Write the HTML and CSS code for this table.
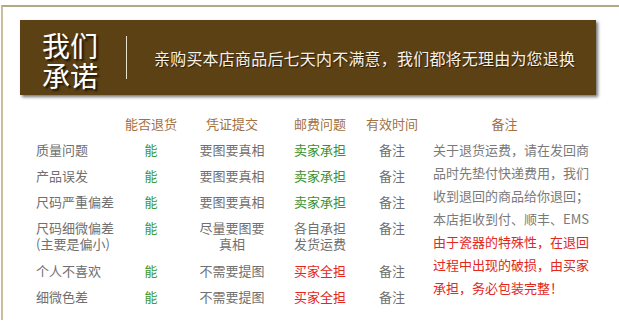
FILE: index.html
```html
<!DOCTYPE html>
<html lang="zh-CN">
<head>
    <meta charset="UTF-8">
    <title>退换承诺</title>
    <link rel="stylesheet" href="styles.css">
</head>
<body>

<div class="frame">
    <div class="banner">
        <div class="promise">我们<br>承诺</div>
        <div class="divider"></div>
        <div class="slogan">亲购买本店商品后七天内不满意，我们都将无理由为您退换</div>
    </div>

    <div class="policy">
        <div class="head"></div>
        <div class="head">能否退货</div>
        <div class="head">凭证提交</div>
        <div class="head">邮费问题</div>
        <div class="head">有效时间</div>
        <div class="head note-head">备注</div>

        <div class="label">质量问题</div>
        <div class="cell yes">能</div>
        <div class="cell">要图要真相</div>
        <div class="cell green">卖家承担</div>
        <div class="cell">备注</div>
        <div class="remarks">
            <span class="gray">关于退货运费，请在发回商<br>品时先垫付快递费用，我们<br>收到退回的商品给你退回；<br>本店拒收到付、顺丰、EMS</span><br>
            <span class="red">由于瓷器的特殊性，在退回<br>过程中出现的破损，由买家<br>承担，务必包装完整！</span>
        </div>

        <div class="label">产品误发</div>
        <div class="cell yes">能</div>
        <div class="cell">要图要真相</div>
        <div class="cell green">卖家承担</div>
        <div class="cell">备注</div>

        <div class="label">尺码严重偏差</div>
        <div class="cell yes">能</div>
        <div class="cell">要图要真相</div>
        <div class="cell green">卖家承担</div>
        <div class="cell">备注</div>

        <div class="label tall">尺码细微偏差<br>(主要是偏小)</div>
        <div class="cell yes tall">能</div>
        <div class="cell tall">尽量要图要<br>真相</div>
        <div class="cell tall">各自承担<br>发货运费</div>
        <div class="cell tall">备注</div>

        <div class="label">个人不喜欢</div>
        <div class="cell yes">能</div>
        <div class="cell">不需要提图</div>
        <div class="cell red">买家全担</div>
        <div class="cell">备注</div>

        <div class="label">细微色差</div>
        <div class="cell yes">能</div>
        <div class="cell">不需要提图</div>
        <div class="cell red">买家全担</div>
        <div class="cell">备注</div>
    </div>
</div>

</body>
</html>
```

FILE: styles.css
```css
body {
    margin: 0;
    background: #fff;
    font-family: "Noto Sans CJK SC", "Noto Sans", sans-serif;
}

.frame {
    margin: 5px 0 0 1px;
    min-height: 315px;
    border-top: 2px solid #b2a888;
    border-left: 2px solid #c9bf9f;
    box-sizing: border-box;
}

/* brown promise banner */
.banner {
    display: flex;
    align-items: center;
    margin: 13px 0 0 17px;
    width: 576px;
    height: 75px;
    background: #5c4115;
    box-shadow: 2px 2px 3px rgba(0, 0, 0, 0.55);
}
.promise {
    margin-left: 22px;
    margin-top: 4px;
    font-size: 28px;
    line-height: 30px;
    color: #fff;
    text-shadow: 2px 2px 2px #1e1406;
}
.divider {
    margin-left: 28px;
    width: 1px;
    height: 43px;
    background: #e9e0cc;
}
.slogan {
    margin-left: 27px;
    font-size: 16px;
    color: #f6f1e6;
    letter-spacing: 0.2px;
    text-shadow: 1px 1px 1px #2a1c08;
}

/* policy table */
.policy {
    display: grid;
    grid-template-columns: 84px 62px 100px 76px 68px 165px;
    grid-template-rows: 26px 26px 26px 26px 43px 26px 26px;
    margin: 15px 0 0 33px;
    font-size: 13px;
    color: #707070;
}
.head {
    display: flex;
    align-items: center;
    justify-content: center;
    color: #a2713f;
}
.note-head {
    padding-right: 8px;
}
.label {
    display: flex;
    align-items: center;
}
.cell {
    display: flex;
    align-items: center;
    justify-content: center;
    text-align: center;
}
.label.tall, .cell.tall {
    align-items: flex-start;
    padding-top: 6px;
    line-height: 16px;
}
.yes {
    color: #3f9a33;
}
.green {
    color: #3a922c;
}
.red {
    color: #e2271d;
}
.remarks {
    grid-column: 6;
    grid-row: 2 / span 6;
    padding: 2px 0 0 7px;
    line-height: 23px;
    white-space: nowrap;
}
.remarks .gray {
    color: #7a7a7a;
}
```
